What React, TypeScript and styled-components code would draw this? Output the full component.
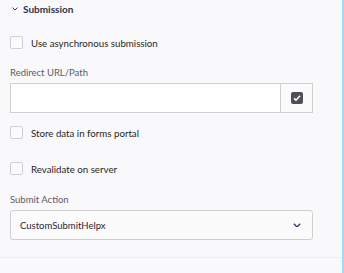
import React from 'react';
import styled, { createGlobalStyle } from 'styled-components';

const Global = createGlobalStyle`
  html, body {
    margin: 0;
    padding: 0;
    background: #f9f9fb;
  }
  body {
    font-family: Lato, "Open Sans", sans-serif;
  }
`;

const Panel = styled.div`
  box-sizing: border-box;
  width: 344px;
  height: 273px;
  border-right: 2px solid #a6d8f7;
  background: #f9f9fb;
  display: flex;
  flex-direction: column;
`;

const Header = styled.div`
  display: flex;
  align-items: center;
  gap: 5px;
  height: 18px;
  padding: 0 0 0 12px;
  font-size: 10px;
  font-weight: 700;
  color: #2f3050;
`;

const Body = styled.div`
  display: flex;
  flex-direction: column;
  padding: 0 29px 0 10px;
`;

const CheckRow = styled.label<{ $top: number }>`
  display: flex;
  align-items: center;
  gap: 8px;
  margin-top: ${p => p.$top}px;
  height: 13px;
  font-size: 9.7px;
  color: #262626;
`;

const Box = styled.span`
  box-sizing: border-box;
  width: 13px;
  height: 13px;
  border: 1px solid #cfcfd4;
  border-radius: 2px;
  background: #fbfbfc;
`;

const FieldLabel = styled.div<{ $top: number }>`
  margin-top: ${p => p.$top}px;
  font-size: 9.5px;
  color: #5a5a66;
  line-height: 14px;
`;

const InputGroup = styled.div`
  box-sizing: border-box;
  margin-top: 3px;
  height: 30px;
  display: flex;
  border: 1px solid #cfcfcf;
  background: #fff;
`;

const TextInput = styled.input`
  flex: 1;
  min-width: 0;
  border: none;
  outline: none;
  background: transparent;
`;

const Addon = styled.div`
  width: 31px;
  border-left: 1px solid #cfcfcf;
  background: #fbfbfc;
  display: flex;
  align-items: center;
  justify-content: center;
`;

const Select = styled.div`
  box-sizing: border-box;
  margin-top: 3px;
  height: 30px;
  display: flex;
  align-items: center;
  justify-content: space-between;
  padding: 0 11px 0 9px;
  border: 1px solid #cfcfd2;
  border-radius: 3px;
  background: #fbfbfc;
  font-size: 9.5px;
  color: #262636;
`;

const Divider = styled.div`
  margin-top: 17px;
  height: 1px;
  background: #ededf0;
`;

const Chevron = ({ size = 8, color = '#2f3050' }: { size?: number; color?: string }) => (
  <svg width={size} height={size * 0.6} viewBox="0 0 10 6">
    <path d="M1 1 L5 5 L9 1" fill="none" stroke={color} strokeWidth="1.6" />
  </svg>
);

const CheckIcon = () => (
  <svg width="12" height="12" viewBox="0 0 12 12">
    <rect width="12" height="12" rx="2" fill="#4f4f57" />
    <path d="M3 6.3 L5 8.2 L9 3.8" fill="none" stroke="#fff" strokeWidth="1.6" />
  </svg>
);

export default function App() {
  return (
    <Panel>
      <Global />
      <Header>
        <Chevron size={6} />
        Submission
      </Header>
      <Body>
        <CheckRow $top={18}>
          <Box />
          Use asynchronous submission
        </CheckRow>
        <FieldLabel $top={17}>Redirect URL/Path</FieldLabel>
        <InputGroup>
          <TextInput />
          <Addon>
            <CheckIcon />
          </Addon>
        </InputGroup>
        <CheckRow $top={13}>
          <Box />
          Store data in forms portal
        </CheckRow>
        <CheckRow $top={23}>
          <Box />
          Revalidate on server
        </CheckRow>
        <FieldLabel $top={18}>Submit Action</FieldLabel>
        <Select>
          CustomSubmitHelpx
          <Chevron size={8} color="#3a2f5a" />
        </Select>
      </Body>
      <Divider />
    </Panel>
  );
}
